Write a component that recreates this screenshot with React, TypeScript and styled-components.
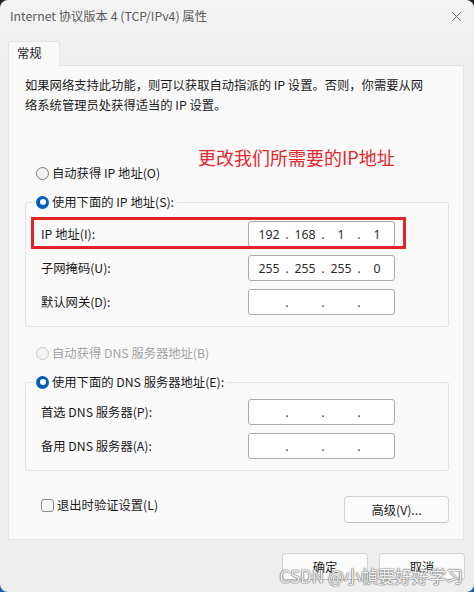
import React from 'react';
import styled, { createGlobalStyle, css } from 'styled-components';

const FONT = `"Noto Sans CJK SC", "Noto Sans", sans-serif`;

const GlobalStyle = createGlobalStyle`
  html, body {
    margin: 0;
    padding: 0;
    background: linear-gradient(#202020, #1d5fb0);
  }
  body {
    width: 474px;
    height: 592px;
    overflow: hidden;
  }
  * { box-sizing: border-box; }
`;

const Window = styled.div`
  position: relative;
  width: 474px;
  height: 592px;
  background: linear-gradient(#f3f3f3, #eeeeee 70px, #eeeeee);
  border-radius: 8px;
  overflow: hidden;
  display: flex;
  flex-direction: column;
  font-family: ${FONT};
  font-size: 12.3px;
  color: #1b1b1b;
`;

const TitleBar = styled.div`
  height: 30px;
  display: flex;
  align-items: center;
  justify-content: space-between;
  padding: 1px 12px 0 10px;
`;

const Title = styled.span`
  font-size: 12.3px;
  color: #5c5c5c;
`;

const CloseIcon = styled.svg`
  width: 11px;
  height: 11px;
  margin-top: 2px;
`;

const TabStrip = styled.div`
  display: flex;
  padding: 11px 0 0 8px;
`;

const Tab = styled.div`
  position: relative;
  z-index: 1;
  width: 52px;
  height: 25px;
  margin-bottom: -1px;
  padding: 2px 0 0 8px;
  background: #f9f9f9;
  border: 1px solid #e3e3e3;
  border-bottom: none;
  border-radius: 3px 3px 0 0;
  color: #1b1b1b;
`;

const Panel = styled.div`
  position: relative;
  height: 475px;
  margin: 0 10px 0 8px;
  background: #f9f9f9;
  border: 1px solid #e3e3e3;
  display: flex;
  flex-direction: column;
`;

const Desc = styled.p`
  margin: 9px 34px 0 16px;
  line-height: 20px;
`;

const Annotation = styled.div`
  position: absolute;
  left: 189px;
  top: 80px;
  font-size: 18px;
  line-height: 22px;
  color: #e5262d;
`;

const RadioRow = styled.div<{ $top: number; $disabled?: boolean }>`
  display: flex;
  align-items: center;
  height: 20px;
  margin-top: ${(p) => p.$top}px;
  padding-left: 27px;
  color: ${(p) => (p.$disabled ? '#a3a3a3' : '#1b1b1b')};
`;

const RadioDot = styled.span<{ $checked?: boolean; $disabled?: boolean }>`
  position: relative;
  width: 13px;
  height: 13px;
  border-radius: 50%;
  margin-right: 3px;
  flex: none;
  ${(p) =>
    p.$checked
      ? css`
          background: #005fb8;
          &::after {
            content: '';
            position: absolute;
            left: 3.5px;
            top: 3.5px;
            width: 6px;
            height: 6px;
            border-radius: 50%;
            background: #ffffff;
          }
        `
      : css`
          background: #f3f3f3;
          border: 1px solid ${p.$disabled ? '#c9c9c9' : '#7d7d7d'};
        `}
`;

const Group = styled.fieldset<{ $top: number; $padTop: number }>`
  margin: ${(p) => p.$top}px 14px 0 16px;
  padding: ${(p) => p.$padTop}px 0 11px 0;
  border: 1px solid #e2e2e2;
  border-radius: 2px;
  min-inline-size: 0;
  display: flex;
  flex-direction: column;
  gap: 8px;
`;

const Legend = styled.legend`
  margin-left: 8px;
  padding: 0 3px 0 2px;
  height: 20px;
  display: flex;
  align-items: center;
`;

const FieldRow = styled.div<{ $highlight?: boolean }>`
  position: relative;
  display: flex;
  align-items: center;
  height: 26px;
  padding: 0 53px 0 15px;
  ${(p) =>
    p.$highlight &&
    css`
      &::after {
        content: '';
        position: absolute;
        left: 5px;
        right: 42px;
        top: -4px;
        bottom: -2px;
        border: 3px solid #e3232c;
      }
    `}
`;

const FieldLabel = styled.span`
  flex: 1;
`;

const IpBox = styled.div`
  width: 147px;
  height: 26px;
  display: flex;
  align-items: center;
  padding-left: 5px;
  background: #ffffff;
  border: 1px solid #ababab;
  border-radius: 3px;
  font-family: "Noto Sans", "Open Sans", sans-serif;
  font-size: 12.3px;
  color: #2b2b2b;
`;

const Seg = styled.span`
  width: 30px;
  text-align: center;
`;

const Dot = styled.span`
  width: 6px;
  text-align: center;
`;

const BottomRow = styled.div`
  display: flex;
  justify-content: space-between;
  align-items: flex-start;
  margin: 25px 14px 0 16px;
`;

const CheckLabel = styled.label`
  display: flex;
  align-items: center;
  height: 18px;
  padding-left: 16px;
`;

const CheckBox = styled.span`
  width: 13px;
  height: 13px;
  border: 1px solid #8a8a8a;
  border-radius: 3px;
  background: #f6f6f6;
  margin-right: 3px;
`;

const Button = styled.button<{ $w: number }>`
  width: ${(p) => p.$w}px;
  height: 27px;
  padding: 0;
  background: #fbfbfb;
  border: 1px solid #d3d3d3;
  border-bottom-color: #c2c2c2;
  border-radius: 4px;
  font-family: ${FONT};
  font-size: 12.3px;
  color: #1b1b1b;
`;

const Footer = styled.div`
  display: flex;
  justify-content: flex-end;
  gap: 11px;
  padding: 13px 9px 0 0;
`;

const Watermark = styled.div`
  position: absolute;
  right: 11px;
  bottom: 5px;
  font-family: ${FONT};
  font-size: 17px;
  line-height: 22px;
  color: rgba(255, 255, 255, 0.92);
  text-shadow: 0 0 1px #6a6a6a, 0 0 1px #6a6a6a, 0 0 2px #888888;
`;

type Ip = [string, string, string, string];

const IpField: React.FC<{ value?: Ip }> = ({ value = ['', '', '', ''] }) => (
  <IpBox>
    <Seg>{value[0]}</Seg>
    <Dot>.</Dot>
    <Seg>{value[1]}</Seg>
    <Dot>.</Dot>
    <Seg>{value[2]}</Seg>
    <Dot>.</Dot>
    <Seg>{value[3]}</Seg>
  </IpBox>
);

export default function App() {
  return (
    <>
      <GlobalStyle />
      <Window>
        <TitleBar>
          <Title>Internet 协议版本 4 (TCP/IPv4) 属性</Title>
          <CloseIcon viewBox="0 0 11 11">
            <path d="M1 1 L10 10 M10 1 L1 10" stroke="#6a6a6a" strokeWidth="1" fill="none" />
          </CloseIcon>
        </TitleBar>
        <TabStrip>
          <Tab>常规</Tab>
        </TabStrip>
        <Panel>
          <Desc>
            如果网络支持此功能，则可以获取自动指派的 IP 设置。否则，你需要从网络系统管理员处获得适当的 IP 设置。
          </Desc>
          <Annotation>更改我们所需要的IP地址</Annotation>
          <RadioRow $top={48}>
            <RadioDot />
            自动获得 IP 地址(O)
          </RadioRow>
          <Group $top={9} $padTop={9}>
            <Legend>
              <RadioDot $checked />
              使用下面的 IP 地址(S):
            </Legend>
            <FieldRow $highlight>
              <FieldLabel>IP 地址(I):</FieldLabel>
              <IpField value={['192', '168', '1', '1']} />
            </FieldRow>
            <FieldRow>
              <FieldLabel>子网掩码(U):</FieldLabel>
              <IpField value={['255', '255', '255', '0']} />
            </FieldRow>
            <FieldRow>
              <FieldLabel>默认网关(D):</FieldLabel>
              <IpField />
            </FieldRow>
          </Group>
          <RadioRow $top={16} $disabled>
            <RadioDot $disabled />
            自动获得 DNS 服务器地址(B)
          </RadioRow>
          <Group $top={9} $padTop={7}>
            <Legend>
              <RadioDot $checked />
              使用下面的 DNS 服务器地址(E):
            </Legend>
            <FieldRow>
              <FieldLabel>首选 DNS 服务器(P):</FieldLabel>
              <IpField />
            </FieldRow>
            <FieldRow>
              <FieldLabel>备用 DNS 服务器(A):</FieldLabel>
              <IpField />
            </FieldRow>
          </Group>
          <BottomRow>
            <CheckLabel>
              <CheckBox />
              退出时验证设置(L)
            </CheckLabel>
            <Button $w={105}>高级(V)...</Button>
          </BottomRow>
        </Panel>
        <Footer>
          <Button $w={86}>确定</Button>
          <Button $w={86}>取消</Button>
        </Footer>
        <Watermark>CSDN @小幀要好好学习</Watermark>
      </Window>
    </>
  );
}
